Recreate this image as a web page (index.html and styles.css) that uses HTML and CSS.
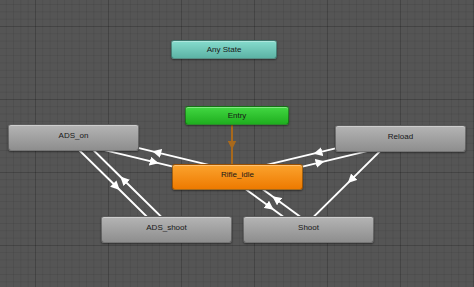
FILE: index.html
```html
<!DOCTYPE html>
<html lang="en">

<head>
    <meta charset="UTF-8">
    <title>Animator</title>
    <link rel="stylesheet" href="styles.css">
</head>

<body>
    <div class="graph">
        <svg class="links" width="474" height="287" viewBox="0 0 474 287">
            <defs>
                <marker id="arrow" viewBox="0 0 10 10" refX="5" refY="5" markerUnits="userSpaceOnUse"
                    markerWidth="9" markerHeight="9" orient="auto">
                    <path d="M0,0 L10,5 L0,10 z" fill="#ffffff" />
                </marker>
                <marker id="arrow-default" viewBox="0 0 10 10" refX="5" refY="5" markerUnits="userSpaceOnUse"
                    markerWidth="9" markerHeight="9" orient="auto">
                    <path d="M0,0 L10,5 L0,10 z" fill="#a8691c" />
                </marker>
            </defs>
            <!-- ADS_on <-> Rifle_idle -->
            <polyline class="link" points="72.3,142.4 154.3,162.1 236.3,181.9" />
            <polyline class="link" points="238.7,172.1 156.7,152.4 74.7,132.6" />
            <!-- Reload <-> Rifle_idle -->
            <polyline class="link" points="399.3,133.1 317.8,152.6 236.3,172.1" />
            <polyline class="link" points="238.7,181.9 320.2,162.4 401.7,142.9" />
            <!-- Reload -> Shoot -->
            <polyline class="link" points="397,134.4 351,179.9 305,225.4" />
            <!-- ADS_on <-> ADS_shoot -->
            <polyline class="link" points="70,141.1 116.5,186.8 163,232.6" />
            <polyline class="link" points="170,225.4 123.5,179.7 77,133.9" />
            <!-- Rifle_idle <-> Shoot -->
            <polyline class="link" points="234.5,181 270,207 305.5,233" />
            <polyline class="link" points="311.5,225 276,199 240.5,173" />
            <!-- Entry -> Rifle_idle -->
            <polyline class="link default" points="232,115.5 232,145 232,177" />
        </svg>

        <div class="node teal any-state">Any State</div>
        <div class="node green entry">Entry</div>
        <div class="node gray ads-on">ADS_on</div>
        <div class="node orange rifle-idle">Rifle_idle</div>
        <div class="node gray reload">Reload</div>
        <div class="node gray ads-shoot">ADS_shoot</div>
        <div class="node gray shoot">Shoot</div>
    </div>
</body>

</html>
```

FILE: styles.css
```css
body {
    margin: 0;
    background-color: #545454;
    font-family: "Liberation Sans", Arial, sans-serif;
    overflow: hidden;
}

.graph {
    position: relative;
    width: 474px;
    height: 287px;
    background-color: #555555;
    background-image:
        linear-gradient(to right, rgba(0, 0, 0, 0.14) 1px, transparent 1px),
        linear-gradient(to bottom, rgba(0, 0, 0, 0.14) 1px, transparent 1px),
        linear-gradient(to right, rgba(0, 0, 0, 0.07) 1px, transparent 1px),
        linear-gradient(to bottom, rgba(0, 0, 0, 0.07) 1px, transparent 1px);
    background-size: 73px 73px, 73px 73px, 7.3px 7.3px, 7.3px 7.3px;
    background-position: 35px 26px, 35px 26px, 35px 26px, 35px 26px;
}

.links {
    position: absolute;
    left: 0;
    top: 0;
}

.link {
    fill: none;
    stroke: #ffffff;
    stroke-width: 2;
    marker-mid: url(#arrow);
}

.link.default {
    stroke: #a8691c;
    marker-mid: url(#arrow-default);
}

.node {
    position: absolute;
    box-sizing: border-box;
    display: flex;
    align-items: center;
    justify-content: center;
    font-size: 8px;
    color: #181818;
    border-radius: 3px;
    border: 1px solid rgba(0, 0, 0, 0.35);
    box-shadow: 0 1px 2px rgba(0, 0, 0, 0.45), inset 0 1px 0 rgba(255, 255, 255, 0.35);
}

.gray {
    background: linear-gradient(#b4b4b4, #8e8e8e);
    width: 131px;
    height: 27px;
    padding-bottom: 5px;
}

.orange {
    background: linear-gradient(#fba32e, #ee7a00);
    width: 131px;
    height: 26px;
    padding-bottom: 5px;
}

.green {
    background: linear-gradient(#42d842, #1fae1f);
    width: 104px;
    height: 19px;
}

.teal {
    background: linear-gradient(#86dccd, #5cb3a5);
    width: 106px;
    height: 19px;
}

.any-state { left: 171px; top: 40px; }
.entry { left: 185px; top: 106px; }
.ads-on { left: 8px; top: 124px; }
.rifle-idle { left: 172px; top: 164px; }
.reload { left: 335px; top: 125px; }
.ads-shoot { left: 101px; top: 216px; }
.shoot { left: 243px; top: 216px; }
```
